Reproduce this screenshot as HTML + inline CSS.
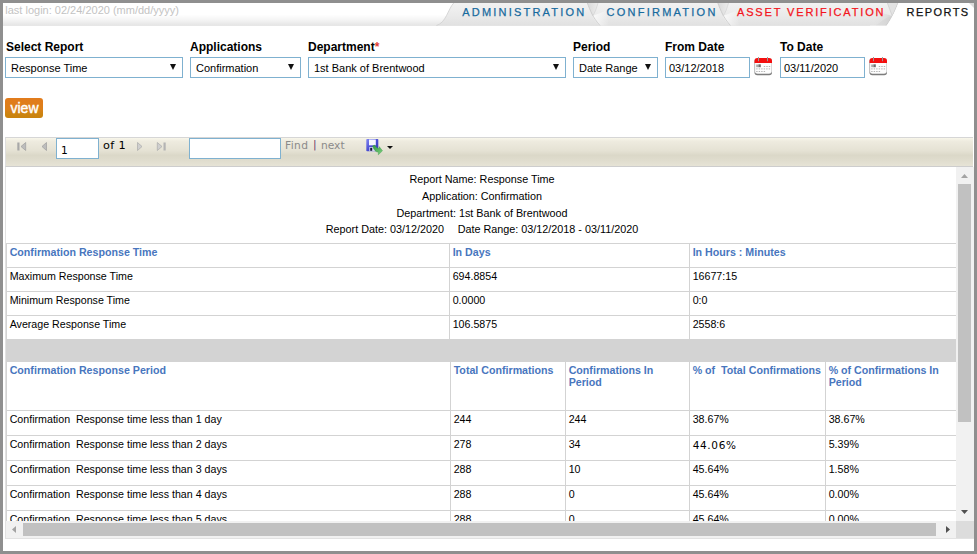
<!DOCTYPE html>
<html>
<head>
<meta charset="utf-8">
<title>Reports</title>
<style>
*{box-sizing:border-box;margin:0;padding:0}
html,body{width:977px;height:554px;overflow:hidden;background:#8f8f8f}
body{position:relative;font-family:"Liberation Sans",Arial,sans-serif;color:#000}
#page{position:absolute;left:3px;top:3px;width:971px;height:548px;background:#fff;overflow:hidden}
.abs{position:absolute;white-space:pre}
/* header */
#hdr{position:absolute;left:0;top:0;width:971px;height:23px;background:linear-gradient(#ffffff 0%,#ffffff 50%,#f4f4f4 74%,#e5e5e5 97%,#ededed 100%)}
#login{left:2.3px;top:1px;font-size:11px;line-height:13px;color:#c3c3c3}
.tab{position:absolute;top:0;height:22px;font-size:11px;line-height:14px;letter-spacing:2px;white-space:pre;-webkit-text-stroke:0.25px currentColor}
/* form */
.lbl{font-size:12px;font-weight:bold;line-height:14px}
.sel{position:absolute;top:54px;height:21px;border:1px solid #7fb1d0;background:#fff;font-size:11px;line-height:21px;padding-left:5px;white-space:pre}
.sel i{position:absolute;right:6.5px;top:6px;width:0;height:0;border-left:3px solid transparent;border-right:3px solid transparent;border-top:6px solid #111}
.inp{position:absolute;top:54px;height:21px;border:1px solid #7fb1d0;background:#fff;font-size:11px;line-height:21px;padding-left:3px;white-space:pre}
#view{position:absolute;left:2px;top:95px;width:38px;height:20px;border-radius:3px;background:linear-gradient(#e27b1c 0%,#dc801a 55%,#cc8410 80%,#c9820e 100%);color:#fff;font-size:14px;-webkit-text-stroke:0.4px #fff;line-height:21px;text-align:center;letter-spacing:0px;padding-left:1px}
/* toolbar */
#tb{position:absolute;left:2px;top:134px;width:968px;height:30px;background:linear-gradient(#f8f6ea 0%,#eeebdf 12%,#e5e2d4 45%,#dbd8c8 62%,#dfdccd 78%,#e6e3d6 100%);border-top:1px solid #d6d6d6;border-bottom:1px solid #cdcdcd;border-left:1px solid #dedede}
.tbt{font-family:"DejaVu Sans",Verdana,sans-serif;font-size:10.67px;line-height:13px}
.tbi{position:absolute;background:#fff;border:1px solid #7fb1d0}
/* report */
#rv{position:absolute;left:2px;top:164px;width:969px;height:372px;border-left:1px solid #e2e2e2;border-bottom:1px solid #e2e2e2;background:#fff;overflow:hidden}
.rt{font-size:10.8px;line-height:12.27px}
.c{position:absolute;border-right:1px solid #d3d3d3;border-bottom:1px solid #d3d3d3;font-size:10.67px;line-height:12.27px;padding:1.67px 0 0 2.67px;white-space:pre;overflow:hidden}
.h{color:#4876be;font-weight:bold}
</style>
</head>
<body>
<div id="page">
  <div id="hdr"></div>
  <svg class="abs" style="left:427px;top:0" width="544" height="23" viewBox="0 0 544 23">
    <defs>
      <linearGradient id="tg" x1="0" y1="0" x2="0" y2="1"><stop offset="0" stop-color="#f2f2f2"/><stop offset="0.55" stop-color="#eaeaea"/><stop offset="1" stop-color="#e1e1e1"/></linearGradient>
      <linearGradient id="hl" x1="0" y1="0" x2="1" y2="0"><stop offset="0" stop-color="#ffffff" stop-opacity="0.750"/><stop offset="1" stop-color="#ffffff" stop-opacity="0"/></linearGradient>
      <linearGradient id="sd" x1="0" y1="0" x2="1" y2="0"><stop offset="0" stop-color="#dadada"/><stop offset="1" stop-color="#ececec"/></linearGradient>
      <linearGradient id="se" x1="0" y1="0" x2="1" y2="0"><stop offset="0" stop-color="#e8e8e8" stop-opacity="0"/><stop offset="1" stop-color="#c9c9c9"/></linearGradient>
    </defs>
    <!-- asset verification -->
    <path d="M290 22.500 L290 0 L468 0 C465.500 6 463 13 456.200 22.500 Z" fill="url(#tg)"/>
    <path d="M446 22.500 C452 18 456 14 462.300 13 C463.500 11 458 19 456.200 22.500 Z" fill="#dcdcdc"/>
    <path d="M440 22.500 L452 10 L462.300 13 C460 17 458 20 456.200 22.500 Z" fill="url(#se)" opacity="0.600"/>
    <path d="M457.400 0 L468 0 C466 5 464.500 9 462.300 13 C460.500 9 459 4 457.400 0 Z" fill="#e3e3e3"/>
    <path d="M457.400 0 C459 4 460.500 9 462.300 13" fill="none" stroke="#cdcdcd" stroke-width="0.700"/>
    <path d="M468 0 C465.500 6 463 13 456.200 22.500" fill="none" stroke="#c8c8c8" stroke-width="0.800"/>
    <!-- confirmation -->
    <path d="M160 22.500 L160 0 L287.800 0 C290.500 7 293.500 15 300.500 22.500 Z" fill="url(#tg)"/>
    <path d="M287.8 0 L298.5 0 C297 5 295.5 10 293 13 C291.3 9 289.5 4 287.8 0 Z" fill="url(#sd)"/>
    <path d="M293 13 C295 17 297.3 20.500 300.5 22.500 L309.8 22.500 L305.8 8 Z" fill="url(#hl)"/>
    <path d="M287.8 0 C290.5 7 293.5 15 300.5 22.500" fill="none" stroke="#c6c6c6" stroke-width="0.800"/>
    <path d="M298.5 0 C297 5 295.5 10 293 13" fill="none" stroke="#d2d2d2" stroke-width="0.700"/>
    <!-- administration -->
    <path d="M6.400 22.500 C16 20 18 6 23.700 0 L157.300 0 C160 7 163 15 170 22.500 Z" fill="url(#tg)"/>
    <path d="M157.3 0 L168 0 C166.5 5 165 10 162.5 13 C160.8 9 159 4 157.3 0 Z" fill="url(#sd)"/>
    <path d="M162.5 13 C164.5 17 166.8 20.500 170 22.500 L179.3 22.500 L175.3 8 Z" fill="url(#hl)"/>
    <path d="M157.3 0 C160 7 163 15 170 22.500" fill="none" stroke="#c6c6c6" stroke-width="0.800"/>
    <path d="M168 0 C166.5 5 165 10 162.5 13" fill="none" stroke="#d2d2d2" stroke-width="0.700"/>
    <path d="M6.400 22.500 C16 20 18 6 23.700 0" fill="none" stroke="#cfcfcf" stroke-width="0.800"/>
    <!-- active tab white -->
    <path d="M468.400 0 L544 0 L544 23 L440 23 L440 22.700 L456.500 22.700 C463.400 13 465.900 6 468.400 0 Z" fill="#fff"/>
    <path d="M539 0 L544 0 L544 5 Z" fill="#dcdcdc"/>
  </svg>
  <div class="abs" id="login">last login: 02/24/2020 (mm/dd/yyyy)</div>
  <div class="tab" style="left:459.3px;top:2px;color:#176a9e;letter-spacing:2.2px">ADMINISTRATION</div>
  <div class="tab" style="left:603.5px;top:2px;color:#176a9e;letter-spacing:2.25px">CONFIRMATION</div>
  <div class="tab" style="left:734px;top:2px;color:#f3141c;letter-spacing:1.85px">ASSET VERIFICATION</div>
  <div class="tab" style="left:903.5px;top:2px;color:#111;letter-spacing:1.45px">REPORTS</div>

  <div class="abs lbl" style="left:3px;top:37px">Select Report</div>
  <div class="abs lbl" style="left:187px;top:37px">Applications</div>
  <div class="abs lbl" style="left:305px;top:37px">Department<span style="color:#e03c31">*</span></div>
  <div class="abs lbl" style="left:570px;top:37px">Period</div>
  <div class="abs lbl" style="left:662px;top:37px">From Date</div>
  <div class="abs lbl" style="left:777px;top:37px">To Date</div>

  <div class="sel" style="left:2px;width:178px">Response Time<i></i></div>
  <div class="sel" style="left:187px;width:111px">Confirmation<i></i></div>
  <div class="sel" style="left:305px;width:258px">1st Bank of Brentwood<i></i></div>
  <div class="sel" style="left:570px;width:85px">Date Range<i></i></div>
  <div class="inp" style="left:662px;width:85px">03/12/2018</div>
  <div class="inp" style="left:777px;width:85px">03/11/2020</div>

  <svg class="abs cal" style="left:751px;top:54px" width="19" height="19" viewBox="0 0 19 19">
    <rect x="0.500" y="2" width="17.500" height="16.300" rx="2.800" fill="#7d7d7d"/>
    <rect x="0.500" y="1" width="17.500" height="15.800" rx="2.800" fill="#c9c9c9"/>
    <rect x="1.200" y="1" width="16.100" height="15.600" rx="2.400" fill="#fefefe"/>
    <path d="M0.500 6 V4 Q0.500 1 3.500 1 H15 Q18 1 18 4 V6 Z" fill="#f40f0f"/>
    <rect x="4" y="0" width="1" height="4.200" fill="#9c9c9c"/><rect x="13" y="0" width="1" height="4.200" fill="#9c9c9c"/>
    <rect x="2.200" y="7.500" width="2.600" height="2.700" fill="#a9a9a9"/><rect x="4.600" y="7.300" width="2.200" height="2.900" fill="#6e6e6e"/>
    <g stroke="#b4b4b4" stroke-width="1" stroke-dasharray="1.400 1.100" fill="none"><path d="M9.800 9.500 H16.500"/><path d="M2.200 11.900 H16.500"/><path d="M2.200 14.500 H11.800"/></g>
  </svg>
  <svg class="abs cal" style="left:866px;top:54px" width="19" height="19" viewBox="0 0 19 19">
    <rect x="0.500" y="2" width="17.500" height="16.300" rx="2.800" fill="#7d7d7d"/>
    <rect x="0.500" y="1" width="17.500" height="15.800" rx="2.800" fill="#c9c9c9"/>
    <rect x="1.200" y="1" width="16.100" height="15.600" rx="2.400" fill="#fefefe"/>
    <path d="M0.500 6 V4 Q0.500 1 3.500 1 H15 Q18 1 18 4 V6 Z" fill="#f40f0f"/>
    <rect x="4" y="0" width="1" height="4.200" fill="#9c9c9c"/><rect x="13" y="0" width="1" height="4.200" fill="#9c9c9c"/>
    <rect x="2.200" y="7.500" width="2.600" height="2.700" fill="#a9a9a9"/><rect x="4.600" y="7.300" width="2.200" height="2.900" fill="#6e6e6e"/>
    <g stroke="#b4b4b4" stroke-width="1" stroke-dasharray="1.400 1.100" fill="none"><path d="M9.800 9.500 H16.500"/><path d="M2.200 11.900 H16.500"/><path d="M2.200 14.500 H11.800"/></g>
  </svg>

  <div id="view">view</div>

  <div id="tb">
    <svg class="abs" style="left:11px;top:4px" width="10" height="9" viewBox="0 0 10 9"><rect x="0.300" y="0.500" width="2.200" height="8" fill="#a8a8a8"/><path d="M8.700 0.500 V8.500 L4 4.500 Z" fill="#bdbdbd" stroke="#9e9e9e" stroke-width=".7"/></svg>
    <svg class="abs" style="left:35px;top:4px" width="7" height="9" viewBox="0 0 7 9"><path d="M5.500 0.500 V8.500 L1 4.500 Z" fill="#bdbdbd" stroke="#9e9e9e" stroke-width=".7"/></svg>
    <div class="tbi" style="left:50px;top:0px;width:43px;height:21px"></div>
    <div class="abs tbt" style="left:55px;top:6px">1</div>
    <div class="abs tbt" style="left:97px;top:1px;font-size:11.3px;letter-spacing:0.3px">of 1</div>
    <svg class="abs" style="left:130px;top:4px" width="7" height="9" viewBox="0 0 7 9"><path d="M1.500 0.500 V8.500 L6 4.500 Z" fill="#cfcfcf" stroke="#ababab" stroke-width=".7"/></svg>
    <svg class="abs" style="left:150px;top:4px" width="10" height="9" viewBox="0 0 10 9"><path d="M1.300 0.500 V8.500 L6 4.500 Z" fill="#cfcfcf" stroke="#ababab" stroke-width=".7"/><rect x="7.500" y="0.500" width="2.200" height="8" fill="#b4b4b4"/></svg>
    <div class="tbi" style="left:183px;top:0px;width:92px;height:21px"></div>
    <div class="abs tbt" style="left:279px;top:1px;color:#8a8a8a;letter-spacing:0.4px">Find</div>
    <div class="abs tbt" style="left:307px;top:0px;color:#6b3a6b">|</div>
    <div class="abs tbt" style="left:315px;top:1px;color:#8a8a8a">next</div>
    <svg class="abs" style="left:360px;top:1px" width="17" height="17" viewBox="0 0 17 17">
      <defs><linearGradient id="fl" x1="0" y1="0" x2="1" y2="1"><stop offset="0" stop-color="#8488f2"/><stop offset="0.5" stop-color="#4a4ed2"/><stop offset="1" stop-color="#3134b4"/></linearGradient>
      <linearGradient id="ga" x1="0" y1="0" x2="1" y2="1"><stop offset="0" stop-color="#2f9a3d"/><stop offset="1" stop-color="#7fd083"/></linearGradient></defs>
      <rect x="0.300" y="0" width="12" height="12.300" rx="0.800" fill="url(#fl)"/>
      <rect x="3" y="0.500" width="6.800" height="5.800" fill="#f6f7ff"/>
      <rect x="3.300" y="8" width="6" height="4.300" fill="#d4d6f5"/>
      <rect x="4.200" y="8.800" width="2" height="3" fill="#15153f"/>
      <path d="M6.600 7 L8.600 6 C10 8.200 11.200 9.300 13 9.700 L13.200 7.600 L16.500 11.800 L12.300 15.800 L12.400 13.300 C9.800 13.100 7.800 11 6.600 7 Z" fill="url(#ga)" stroke="#3a9a46" stroke-width=".4"/>
    </svg>
    <svg class="abs" style="left:381px;top:8px" width="6" height="3" viewBox="0 0 6 3"><path d="M0 0 H6 L3 3 Z" fill="#111"/></svg>
  </div>

  <div id="rv">
    <div class="abs rt" style="left:0;width:952px;top:5.500px;text-align:center">Report Name: Response Time</div>
    <div class="abs rt" style="left:0;width:952px;top:23.300px;text-align:center">Application: Confirmation</div>
    <div class="abs rt" style="left:0;width:952px;top:40.100px;text-align:center">Department: 1st Bank of Brentwood</div>
    <div class="abs rt" style="left:0;width:952px;top:55.900px;text-align:center">Report Date: 03/12/2020<span style="letter-spacing:0.4px">    </span>Date Range: 03/12/2018 - 03/11/2020</div>

    <!-- table 1 : rv origin is page(3,164) => screen (6,167) -->
    <div class="abs" style="left:0;top:76px;width:951px;height:1px;background:#d3d3d3"></div>
    <div class="abs" style="left:0;top:76px;width:1px;height:340px;background:#d3d3d3"></div>

    <div class="c h" style="left:1px;top:77px;width:443px;height:24px">Confirmation Response Time</div>
    <div class="c h" style="left:444px;top:77px;width:240px;height:24px">In Days</div>
    <div class="c h" style="left:684px;top:77px;width:267px;height:24px">In Hours : Minutes</div>

    <div class="c" style="left:1px;top:101px;width:443px;height:24px">Maximum Response Time</div>
    <div class="c" style="left:444px;top:101px;width:240px;height:24px">694.8854</div>
    <div class="c" style="left:684px;top:101px;width:267px;height:24px">16677:15</div>

    <div class="c" style="left:1px;top:125px;width:443px;height:24px">Minimum Response Time</div>
    <div class="c" style="left:444px;top:125px;width:240px;height:24px">0.0000</div>
    <div class="c" style="left:684px;top:125px;width:267px;height:24px">0:0</div>

    <div class="c" style="left:1px;top:149px;width:443px;height:24px">Average Response Time</div>
    <div class="c" style="left:444px;top:149px;width:240px;height:24px">106.5875</div>
    <div class="c" style="left:684px;top:149px;width:267px;height:24px">2558:6</div>

    <div class="abs" style="left:0;top:172px;width:951px;height:23px;background:#d3d3d3"></div>

    <div class="c h" style="left:1px;top:195px;width:444px;height:49px">Confirmation Response Period</div>
    <div class="c h" style="left:445px;top:195px;width:115px;height:49px">Total Confirmations</div>
    <div class="c h" style="left:560px;top:195px;width:124px;height:49px;white-space:normal">Confirmations In Period</div>
    <div class="c h" style="left:684px;top:195px;width:136px;height:49px">% of  Total Confirmations</div>
    <div class="c h" style="left:820px;top:195px;width:131px;height:49px;white-space:normal">% of Confirmations In Period</div>

    <div class="c" style="left:1px;top:244px;width:444px;height:25px">Confirmation  Response time less than 1 day</div>
    <div class="c" style="left:445px;top:244px;width:115px;height:25px">244</div>
    <div class="c" style="left:560px;top:244px;width:124px;height:25px">244</div>
    <div class="c" style="left:684px;top:244px;width:136px;height:25px">38.67%</div>
    <div class="c" style="left:820px;top:244px;width:131px;height:25px">38.67%</div>

    <div class="c" style="left:1px;top:269px;width:444px;height:25px">Confirmation  Response time less than 2 days</div>
    <div class="c" style="left:445px;top:269px;width:115px;height:25px">278</div>
    <div class="c" style="left:560px;top:269px;width:124px;height:25px">34</div>
    <div class="c" style="left:684px;top:269px;width:136px;height:25px;font-family:'DejaVu Sans','Liberation Sans',sans-serif;font-size:10.5px;letter-spacing:0.65px;padding-top:3.2px">44.06%</div>
    <div class="c" style="left:820px;top:269px;width:131px;height:25px">5.39%</div>

    <div class="c" style="left:1px;top:294px;width:444px;height:25px">Confirmation  Response time less than 3 days</div>
    <div class="c" style="left:445px;top:294px;width:115px;height:25px">288</div>
    <div class="c" style="left:560px;top:294px;width:124px;height:25px">10</div>
    <div class="c" style="left:684px;top:294px;width:136px;height:25px">45.64%</div>
    <div class="c" style="left:820px;top:294px;width:131px;height:25px">1.58%</div>

    <div class="c" style="left:1px;top:319px;width:444px;height:25px">Confirmation  Response time less than 4 days</div>
    <div class="c" style="left:445px;top:319px;width:115px;height:25px">288</div>
    <div class="c" style="left:560px;top:319px;width:124px;height:25px">0</div>
    <div class="c" style="left:684px;top:319px;width:136px;height:25px">45.64%</div>
    <div class="c" style="left:820px;top:319px;width:131px;height:25px">0.00%</div>

    <div class="c" style="left:1px;top:344px;width:444px;height:25px">Confirmation  Response time less than 5 days</div>
    <div class="c" style="left:445px;top:344px;width:115px;height:25px">288</div>
    <div class="c" style="left:560px;top:344px;width:124px;height:25px">0</div>
    <div class="c" style="left:684px;top:344px;width:136px;height:25px">45.64%</div>
    <div class="c" style="left:820px;top:344px;width:131px;height:25px">0.00%</div>

    <!-- vertical scrollbar -->
    <div class="abs" style="left:950px;top:0;width:19px;height:354px;background:#f1f1f1"></div>
    <svg class="abs" style="left:955px;top:7px" width="7" height="4" viewBox="0 0 7 4"><path d="M0 4 H7 L3.500 0 Z" fill="#a3a3a3"/></svg>
    <div class="abs" style="left:952px;top:17px;width:13px;height:238px;background:#c1c1c1"></div>
    <svg class="abs" style="left:955px;top:343px" width="7" height="4" viewBox="0 0 7 4"><path d="M0 0 H7 L3.500 4 Z" fill="#505050"/></svg>
    <!-- horizontal scrollbar -->
    <div class="abs" style="left:0;top:354px;width:951px;height:17px;background:#f1f1f1"></div>
    <svg class="abs" style="left:6px;top:359px" width="4" height="7" viewBox="0 0 4 7"><path d="M4 0 V7 L0 3.500 Z" fill="#a3a3a3"/></svg>
    <div class="abs" style="left:17px;top:356px;width:913px;height:13px;background:#c1c1c1"></div>
    <svg class="abs" style="left:940px;top:359px" width="4" height="7" viewBox="0 0 4 7"><path d="M0 0 V7 L4 3.500 Z" fill="#505050"/></svg>
    <div class="abs" style="left:950px;top:354px;width:19px;height:17px;background:#dcdcdc"></div>
  </div>
</div>
</body>
</html>
